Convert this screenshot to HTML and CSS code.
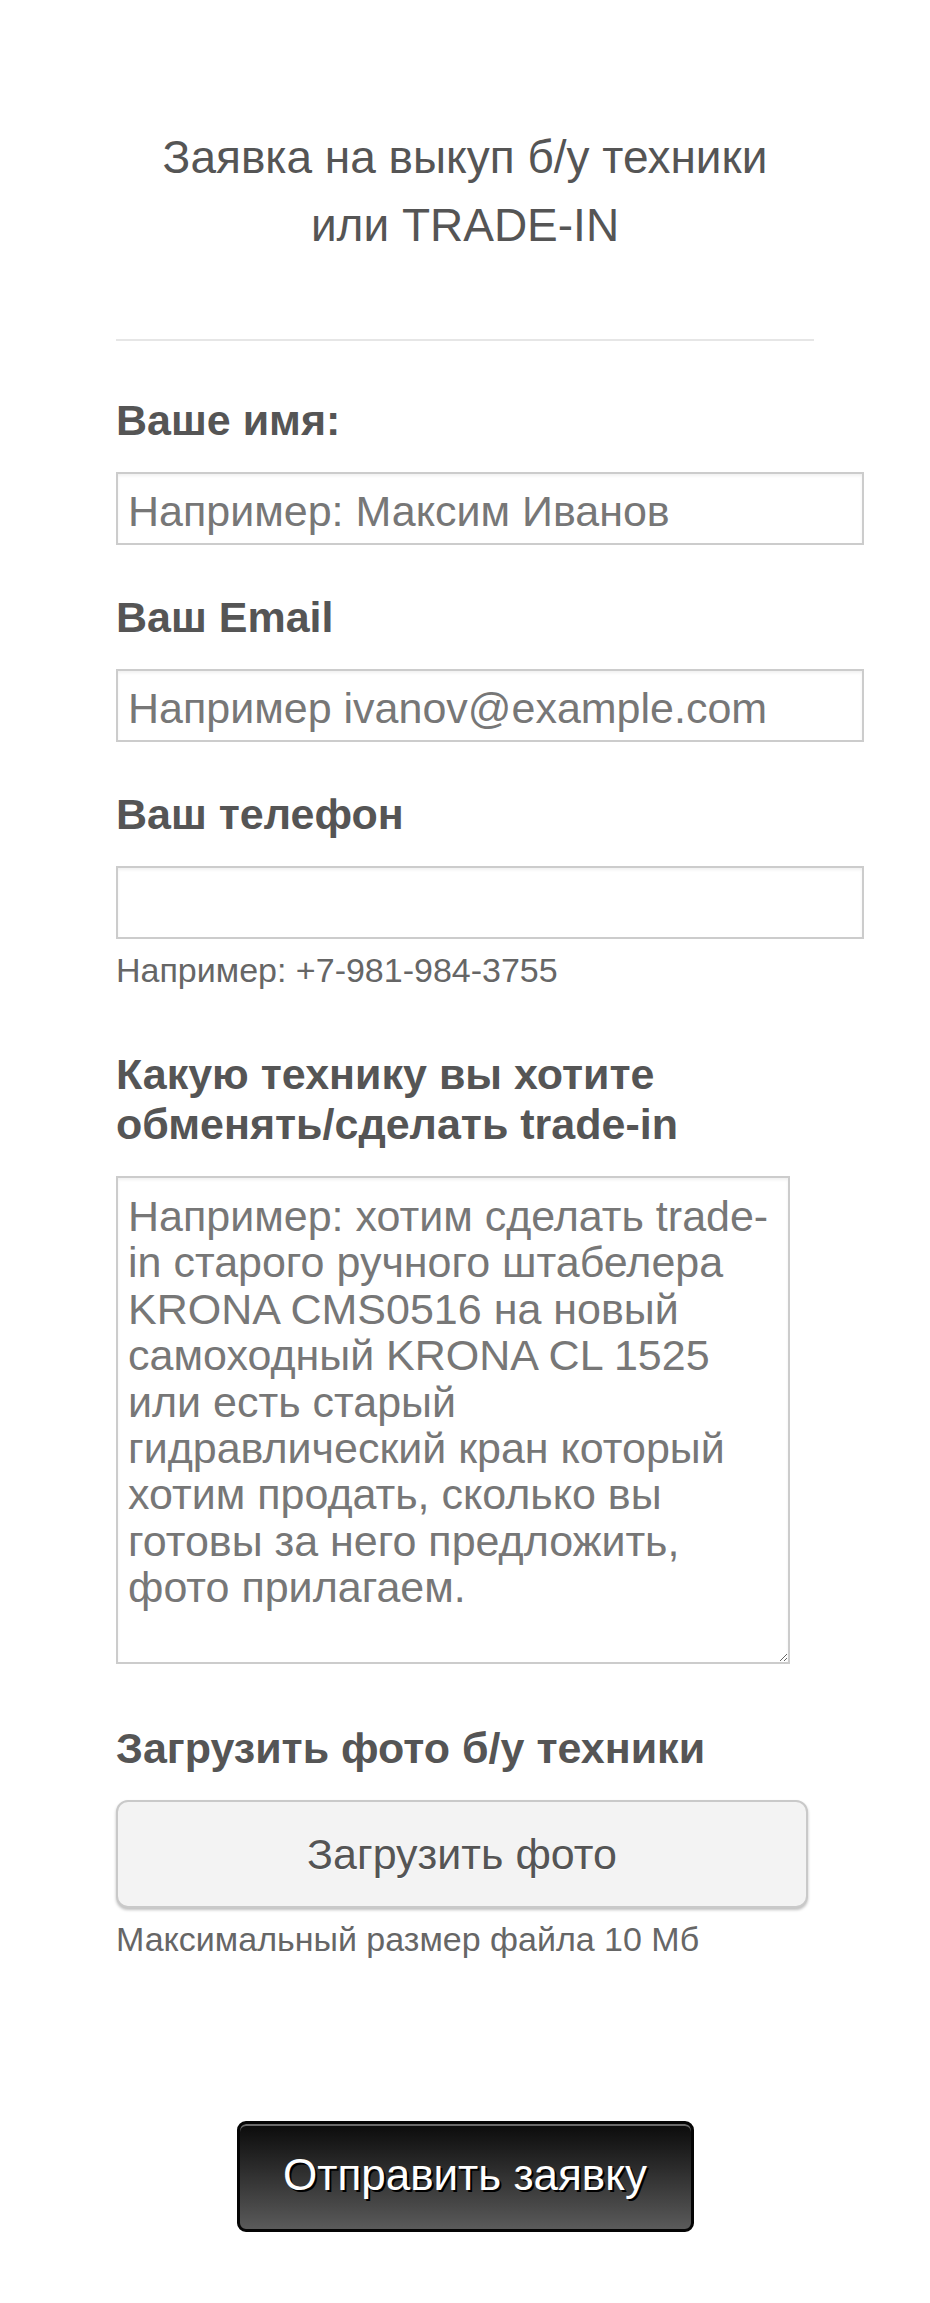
FILE: index.html
```html
<!DOCTYPE html>
<html lang="ru">
<head>
<meta charset="utf-8">
<title>Заявка на выкуп б/у техники</title>
<link rel="stylesheet" href="styles.css">
</head>
<body>
<div class="page">
  <h1 class="title">Заявка на выкуп б/у техники<br>или TRADE-IN</h1>
  <hr class="divider">
  <form class="form">
    <div class="field">
      <label class="label">Ваше имя:</label>
      <input class="input" type="text" placeholder="Например: Максим Иванов">
    </div>
    <div class="field">
      <label class="label">Ваш Email</label>
      <input class="input" type="text" placeholder="Например ivanov@example.com">
    </div>
    <div class="field">
      <label class="label">Ваш телефон</label>
      <input class="input" type="text">
      <div class="hint">Например: +7-981-984-3755</div>
    </div>
    <div class="field field-gap">
      <label class="label">Какую технику вы хотите обменять/сделать trade-in</label>
      <textarea class="textarea" placeholder="Например: хотим сделать trade-in старого ручного штабелера KRONA CMS0516 на новый самоходный KRONA CL 1525 или есть старый гидравлический кран который хотим продать, сколько вы готовы за него предложить, фото прилагаем."></textarea>
    </div>
    <div class="field field-gap">
      <label class="label">Загрузить фото б/у техники</label>
      <button type="button" class="upload">Загрузить фото</button>
      <div class="hint">Максимальный размер файла 10 Мб</div>
    </div>
    <div class="submit-row">
      <button type="button" class="submit">Отправить заявку</button>
    </div>
  </form>
</div>
</body>
</html>
```

FILE: styles.css
```css
html, body {
  margin: 0;
  padding: 0;
  background: #ffffff;
}
body {
  font-family: "Liberation Sans", Arial, sans-serif;
  color: #555555;
}
.page {
  width: 930px;
  height: 2303px;
  box-sizing: border-box;
  padding: 123px 66px 0 116px;
}
.title {
  margin: 0;
  font-size: 46px;
  font-weight: normal;
  line-height: 68px;
  text-align: center;
  color: #555555;
  margin-left: -116px;
  margin-right: -66px;
}
.divider {
  width: 698px;
  margin: 80px 0 0 0;
  border: 0;
  height: 2px;
  background: #e6e6e6;
}
.form {
  display: flex;
  flex-direction: column;
  padding-top: 54px;
}
.field {
  display: flex;
  flex-direction: column;
  margin-bottom: 47px;
}
.field-gap {
  margin-top: 12px;
}
.label {
  font-size: 43px;
  font-weight: bold;
  line-height: 50px;
  color: #555555;
  margin-bottom: 27px;
}
.input {
  box-sizing: border-box;
  width: 748px;
  height: 73px;
  margin: 0;
  padding: 6px 10px 0;
  border: 2px solid #cccccc;
  border-radius: 0;
  box-shadow: inset 0 2px 3px rgba(0, 0, 0, 0.06);
  font-family: "Liberation Sans", Arial, sans-serif;
  font-size: 43px;
  color: #555555;
  background: #ffffff;
  outline: none;
}
.input::placeholder,
.textarea::placeholder {
  color: #777777;
  opacity: 1;
}
.hint {
  font-size: 34px;
  line-height: 40px;
  color: #666666;
  margin-top: 11px;
}
.textarea {
  box-sizing: border-box;
  width: 674px;
  height: 488px;
  margin: 0;
  padding: 15px 8px 10px 10px;
  border: 2px solid #cccccc;
  border-radius: 0;
  box-shadow: inset 0 2px 3px rgba(0, 0, 0, 0.06);
  font-family: "Liberation Sans", Arial, sans-serif;
  font-size: 43px;
  line-height: 46.4px;
  color: #555555;
  background: #ffffff;
  resize: both;
  overflow: hidden;
  outline: none;
}
.upload {
  box-sizing: border-box;
  width: 692px;
  height: 108px;
  margin: 0;
  padding: 0;
  border: 2px solid #c9c9c9;
  border-radius: 12px;
  background: #f3f3f3;
  box-shadow: 0 2px 3px rgba(0, 0, 0, 0.25);
  font-family: "Liberation Sans", Arial, sans-serif;
  font-size: 43px;
  color: #555555;
  text-shadow: 0 1px 0 #ffffff;
}
.submit-row {
  display: flex;
  justify-content: center;
  margin-left: -116px;
  margin-right: -66px;
  padding-top: 115px;
}
.submit {
  box-sizing: border-box;
  width: 457px;
  height: 111px;
  margin: 0;
  padding: 0 0 4px;
  border: 3px solid #050505;
  border-radius: 9px;
  background: linear-gradient(to bottom, #0b0b0b 0%, #1e1e1e 25%, #3a3a3a 60%, #5a5a5a 100%);
  box-shadow: inset 0 2px 0 #6a6a6a;
  font-family: "Liberation Sans", Arial, sans-serif;
  font-size: 44px;
  color: #ffffff;
  text-shadow: 2px 2px 0 #000000;
}
```
